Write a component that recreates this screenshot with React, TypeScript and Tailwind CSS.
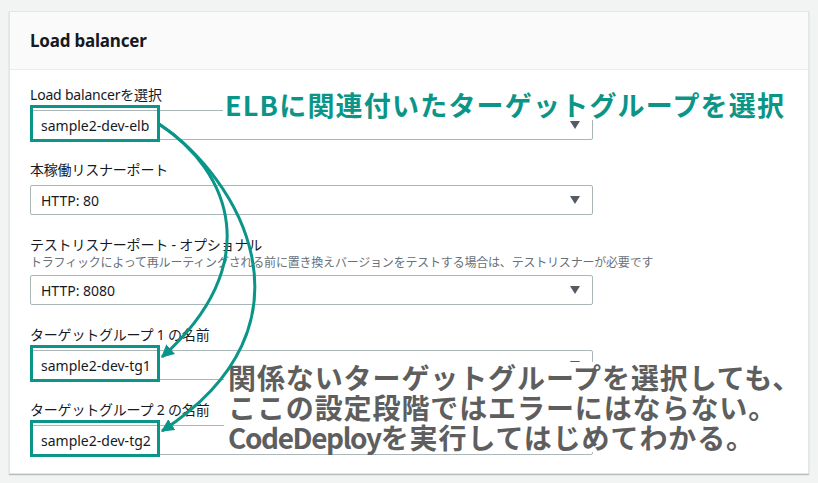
import React from "react";

const TEAL = "#0b9588";

function Triangle() {
  return (
    <svg width="10" height="8" viewBox="0 0 10 8" className="shrink-0">
      <polygon points="0,0 10,0 5,8" fill="#545b64" />
    </svg>
  );
}

function Field({
  label,
  desc,
  value,
  highlight,
}: {
  label: string;
  desc?: string;
  value: string;
  highlight?: boolean;
}) {
  return (
    <div className="flex flex-col">
      <div className="text-[14px] leading-[20px] text-[#16191f] tracking-[-0.2px]">{label}</div>
      {desc && (
        <div className="text-[12px] leading-[15px] text-[#687078] tracking-[-0.2px]">{desc}</div>
      )}
      <div className="relative mt-[5px] w-[563px] h-[30px] border border-[#aab7b8] rounded-[2px] flex items-center justify-between pl-[10px] pr-[12px] bg-white">
        <span className="text-[14px] text-[#16191f]">{value}</span>
        <Triangle />
        {highlight && (
          <div className="absolute left-[-1px] top-[-6px] w-[130px] h-[37px] border-[3px] border-[#0b9588]" />
        )}
      </div>
    </div>
  );
}

export default function App() {
  return (
    <div className="relative w-[818px] h-[483px] overflow-hidden bg-[#f2f3f3] pt-[11px] pl-[9px] font-['Noto_Sans','Noto_Sans_CJK_JP',sans-serif]">
      <div className="w-[800px] h-[463px] bg-white border border-[#e1e5e5] shadow-[0_1px_1px_0_rgba(0,28,36,0.25)] flex flex-col">
        <div className="h-[58px] shrink-0 bg-[#fafafa] border-b border-[#eaeded] flex items-center pl-[20px]">
          <span className="text-[17px] font-bold text-[#16191f] tracking-[-0.2px]">Load balancer</span>
        </div>
        <div className="flex flex-col gap-[20px] pl-[20px] pt-[15px]">
          <Field label="Load balancerを選択" value="sample2-dev-elb" highlight />
          <Field label="本稼働リスナーポート" value="HTTP: 80" />
          <Field
            label="テストリスナーポート - オプショナル"
            desc="トラフィックによって再ルーティングされる前に置き換えバージョンをテストする場合は、テストリスナーが必要です"
            value="HTTP: 8080"
          />
          <Field label="ターゲットグループ 1 の名前" value="sample2-dev-tg1" highlight />
          <Field label="ターゲットグループ 2 の名前" value="sample2-dev-tg2" highlight />
        </div>
      </div>

      {/* teal annotation */}
      <div className="absolute left-[223px] top-[90px] bg-white pl-[2px] pr-[4px] text-[27px] leading-[30px] font-bold tracking-[1.2px] text-[#0b9588] font-['Noto_Sans_CJK_JP',sans-serif] whitespace-nowrap">
        ELBに関連付いたターゲットグループを選択
      </div>

      {/* gray annotation */}
      <div className="absolute left-[224px] top-[362px] bg-white pl-[4px] pr-[4px] text-[28px] leading-[30px] font-bold tracking-[0.9px] text-[#5e5e5e] font-['Noto_Sans_CJK_JP',sans-serif] whitespace-nowrap">
        関係ないターゲットグループを選択しても、
        <br />
        ここの設定段階ではエラーにはならない。
        <br />
        <span className="tracking-[-1.4px]">CodeDeploy</span>を実行してはじめてわかる。
      </div>

      {/* arrows */}
      <svg className="absolute left-0 top-0 pointer-events-none" width="818" height="483" viewBox="0 0 818 483">
        <defs>
          <marker
            id="ah"
            viewBox="0 0 10 10"
            refX="9"
            refY="5"
            markerWidth="13"
            markerHeight="13"
            markerUnits="userSpaceOnUse"
            orient="auto"
          >
            <path d="M0,0 L10,5 L0,10 z" fill={TEAL} />
          </marker>
        </defs>
        <path
          d="M159 124 C 232 172, 265 265, 162 357"
          fill="none"
          stroke={TEAL}
          strokeWidth="3"
          markerEnd="url(#ah)"
        />
        <path
          d="M159 124 C 240 178, 325 325, 162 431"
          fill="none"
          stroke={TEAL}
          strokeWidth="3"
          markerEnd="url(#ah)"
        />
      </svg>
    </div>
  );
}
